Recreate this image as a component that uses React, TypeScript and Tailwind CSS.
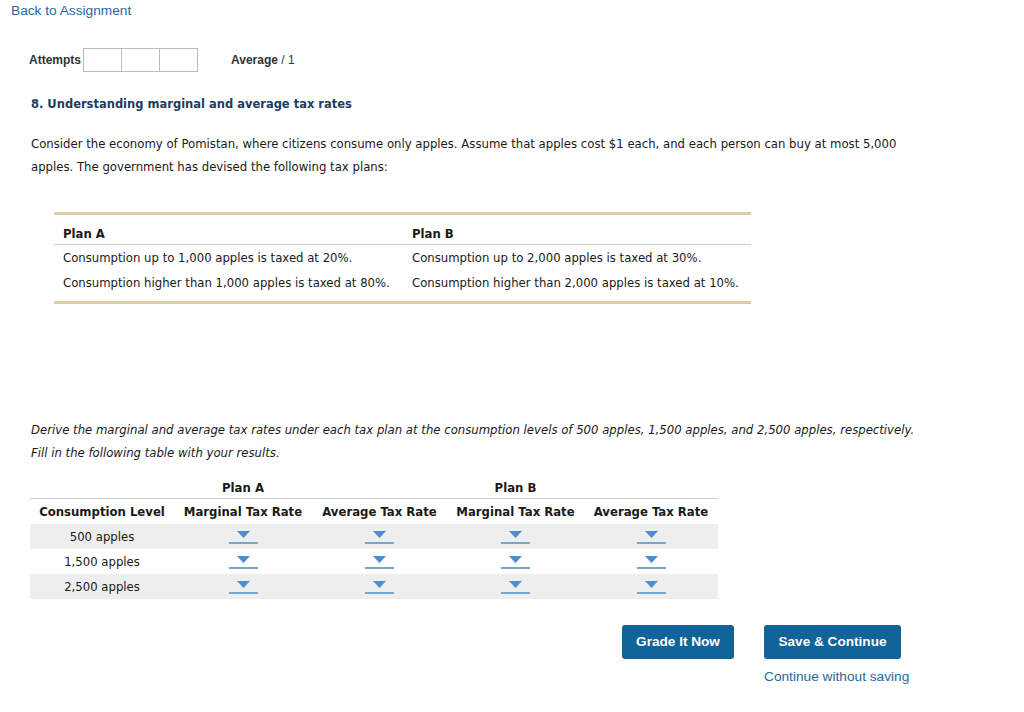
import React from "react";

const verdana = { fontFamily: '"DejaVu Sans", Verdana, sans-serif' };
const arial = { fontFamily: '"Liberation Sans", Arial, sans-serif' };

function Dropdown() {
  return (
    <div className="mx-auto flex h-[15px] w-[29px] flex-col items-center justify-end border-b-2 border-[#74a7d6]">
      <svg width="13" height="7" viewBox="0 0 13 7" className="mb-[4px]">
        <polygon points="0,0 13,0 6.5,7" fill="#4d8fcb" />
      </svg>
    </div>
  );
}

const levels = ["500 apples", "1,500 apples", "2,500 apples"];
const cols = "grid grid-cols-[144px_138px_135px_137px_134px]";

export default function App() {
  return (
    <div className="relative min-h-[712px] w-[1024px] bg-white text-[#1a1a1a]">
      <div className="px-[11px] pt-[1px] leading-[17px]" style={arial}>
        <a className="text-[13.7px] leading-[17px] text-[#1f6aa0]">Back to Assignment</a>
      </div>

      {/* attempts strip */}
      <div className="mt-[29px] flex items-center pl-[29px] leading-[16px]" style={arial}>
        <span className="text-[12px] font-bold text-[#333]">Attempts</span>
        <div className="ml-[2px] flex">
          <div className="h-[24px] w-[39px] border border-[#bbb]" />
          <div className="h-[24px] w-[38px] border border-l-0 border-[#bbb]" />
          <div className="h-[24px] w-[38px] border border-l-0 border-[#bbb]" />
        </div>
        <span className="ml-[33px] text-[12px] font-bold text-[#333]">
          Average <span className="font-normal">/ 1</span>
        </span>
      </div>

      <div className="w-[921px] pl-[31px]" style={verdana}>
        <h2 className="mt-[25px] text-[11.5px] font-bold leading-[14px] text-[#1b3d63]">
          8. Understanding marginal and average tax rates
        </h2>

        <p className="mt-[22px] text-[11.7px] leading-[23px]">
          Consider the economy of Pomistan, where citizens consume only apples. Assume that apples cost $1 each, and each
          person can buy at most 5,000 apples. The government has devised the following tax plans:
        </p>

        {/* plans */}
        <div className="ml-[23px] mt-[33px] w-[697px] border-y-[3px] border-[#dccfa6] pb-[6px] pt-[12px] text-[11.7px] leading-[14px]">
          <div className="flex border-b border-[#ccc] pb-[3px] font-bold">
            <div className="w-[349px] pl-[9px]">Plan A</div>
            <div className="pl-[9px]">Plan B</div>
          </div>
          <div className="flex h-[25px] items-center">
            <div className="w-[349px] pl-[9px]">Consumption up to 1,000 apples is taxed at 20%.</div>
            <div className="pl-[9px]">Consumption up to 2,000 apples is taxed at 30%.</div>
          </div>
          <div className="flex h-[25px] items-center">
            <div className="w-[349px] pl-[9px]">Consumption higher than 1,000 apples is taxed at 80%.</div>
            <div className="pl-[9px]">Consumption higher than 2,000 apples is taxed at 10%.</div>
          </div>
        </div>

        <p className="mt-[115px] text-[11.7px] italic leading-[23px]">
          Derive the marginal and average tax rates under each tax plan at the consumption levels of 500 apples, 1,500
          apples, and 2,500 apples, respectively.
          <br />
          Fill in the following table with your results.
        </p>
      </div>

      {/* answer grid */}
      <div className="ml-[30px] mt-[16px] w-[688px] text-[11.7px] leading-[14px]" style={verdana}>
        <div className={`${cols} border-b border-[#ccc] pb-[3px] font-bold`}>
          <div />
          <div className="text-center">Plan A</div>
          <div />
          <div className="text-center">Plan B</div>
          <div />
        </div>
        <div className={`${cols} h-[25px] items-center font-bold`}>
          <div className="text-center">Consumption Level</div>
          <div className="text-center">Marginal Tax Rate</div>
          <div className="text-center">Average Tax Rate</div>
          <div className="text-center">Marginal Tax Rate</div>
          <div className="text-center">Average Tax Rate</div>
        </div>
        {levels.map((lv, i) => (
          <div key={lv} className={`${cols} h-[25px] items-center ${i % 2 === 0 ? "bg-[#eeeeee]" : "bg-white"}`}>
            <div className="text-center">{lv}</div>
            <Dropdown />
            <Dropdown />
            <Dropdown />
            <Dropdown />
          </div>
        ))}
      </div>

      {/* actions */}
      <div className="ml-[622px] mt-[26px] flex gap-[30px]" style={arial}>
        <button className="h-[34px] w-[112px] rounded-[3px] bg-[#11649a] text-[13.6px] font-bold text-white">
          Grade It Now
        </button>
        <div className="flex flex-col">
          <button className="h-[34px] w-[137px] rounded-[3px] bg-[#11649a] text-[13.6px] font-bold text-white">
            Save &amp; Continue
          </button>
          <a className="mt-[9px] text-[13.7px] leading-[17px] text-[#1f6aa0]">Continue without saving</a>
        </div>
      </div>
    </div>
  );
}
